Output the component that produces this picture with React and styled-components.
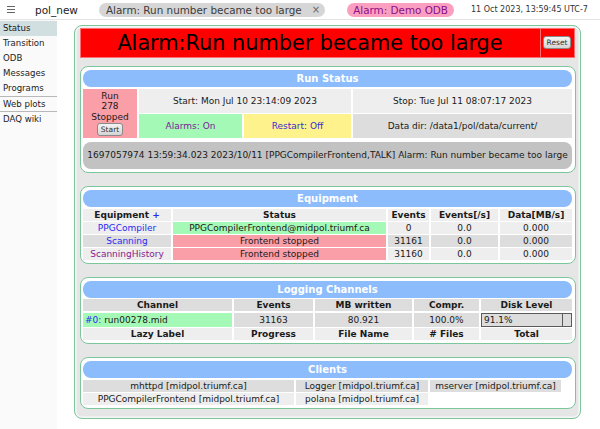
import React from "react";
import styled, { createGlobalStyle } from "styled-components";

const GREEN = "#7cc69c";
const BLUE_HDR = "#8cbcfc";
const PINK = "#fa9ea8";
const MINT = "#a4f9b6";
const YELLOW = "#fef28c";
const LIGHT = "#eeeeee";
const DARK = "#dddddd";

const Global = createGlobalStyle`
  html, body { margin: 0; padding: 0; background: #fff; }
  body { font-family: "DejaVu Sans", Verdana, sans-serif; color: #1a1a1a; }
  * { box-sizing: border-box; }
`;

const Page = styled.div`
  width: 600px;
  height: 429px;
  overflow: hidden;
  display: flex;
  flex-direction: column;
`;

const TopBar = styled.header`
  flex: 0 0 20px;
  display: flex;
  align-items: center;
  border-bottom: 1px solid #e4e4e4;
  background: #fff;
  padding-left: 7px;
`;

const MenuIcon = styled.svg`
  width: 8px;
  height: 7px;
  flex: none;
`;

const Title = styled.span`
  margin-left: 20px;
  font-size: 10.5px;
  color: #222;
  line-height: 14px;
`;

const Pill = styled.span`
  display: inline-flex;
  align-items: center;
  height: 14px;
  border-radius: 7px;
  font-size: 10.4px;
  line-height: 14px;
  white-space: nowrap;
  margin-left: ${(p) => p.$gap}px;
  padding: 0 ${(p) => (p.$tone === "pink" ? 6 : 5)}px 0 ${(p) => (p.$tone === "pink" ? 6 : 7)}px;
  background: ${(p) => (p.$tone === "pink" ? "#fb9fc0" : "#d6d6d6")};
  color: ${(p) => (p.$tone === "pink" ? "#8a0f8a" : "#3c3c3c")};
`;

const CloseX = styled.span`
  margin-left: 10px;
  font-size: 10px;
  color: #666;
`;

const Clock = styled.span`
  margin-left: 17px;
  font-size: 8px;
  color: #333;
  white-space: nowrap;
`;

const Body = styled.div`
  flex: 1;
  display: flex;
  min-height: 0;
`;

const Sidebar = styled.nav`
  flex: 0 0 57px;
  background: #fafafa;
  padding-top: 1px;
  display: flex;
  flex-direction: column;
`;

const NavItem = styled.div`
  height: 15px;
  line-height: 15px;
  padding-left: 3px;
  font-size: 8.6px;
  color: #222;
  white-space: nowrap;
  background: ${(p) => (p.$active ? "#d1dfe0" : "transparent")};
  border-top: ${(p) => (p.$divider ? "1px solid #b8b8b8" : "none")};
`;

const Main = styled.main`
  flex: 1;
  padding: 5px 19px 5px 17px;
  background: #fff;
`;

const Frame = styled.div`
  border: 1.5px solid ${GREEN};
  border-radius: 8px;
  background: #e6e6e6;
  box-shadow: inset 0 0 0 1.5px #f6f6f6;
  padding: 1.5px 4.5px 9px 4.5px;
  display: flex;
  flex-direction: column;
`;

const Banner = styled.div`
  height: 30px;
  display: flex;
  background: #ff0000;
  border: 1px solid #ff6f6f;
  margin-right: 1px;
  margin-bottom: 8px;
`;

const BannerText = styled.div`
  flex: 1;
  display: flex;
  align-items: center;
  justify-content: center;
  font-size: 20.8px;
  color: #000;
  white-space: nowrap;
`;

const BannerAction = styled.div`
  flex: 0 0 34px;
  display: flex;
  align-items: center;
  justify-content: center;
  border-left: 1px solid #ff6f6f;
`;

const SmallButton = styled.button`
  font-family: "DejaVu Sans", Verdana, sans-serif;
  font-size: 7.5px;
  line-height: 9px;
  color: #333;
  padding: 1px 3px;
  border: 1px solid #8a8a8a;
  border-radius: 3px;
  background: linear-gradient(#f4f4f4, #d4d4d4);
  margin-top: ${(p) => p.$mt || 0}px;
`;

const Panel = styled.section`
  border: 1.5px solid ${GREEN};
  border-radius: 8px;
  background: #fff;
  padding: 3px 2.5px;
  margin-bottom: 13px;
  &:last-child { margin-bottom: 0; }
`;

const PanelHeader = styled.div`
  height: ${(p) => p.$h || 17}px;
  line-height: ${(p) => p.$h || 17}px;
  background: ${BLUE_HDR};
  border-radius: 8px;
  color: #fff;
  font-weight: bold;
  font-size: 10px;
  text-align: center;
`;

const RunGrid = styled.div`
  margin-top: 2px;
  display: grid;
  grid-template-columns: 54px 103px 107px 1fr;
  grid-template-rows: 24px 24px;
  column-gap: 2px;
  row-gap: 1px;
  grid-template-areas:
    "run start start stop"
    "run alarm restart dir";
`;

const tones = { light: LIGHT, dark: DARK, pink: PINK, mint: MINT, yellow: YELLOW, none: "transparent" };

const InfoCell = styled.div`
  grid-area: ${(p) => p.$area};
  background: ${(p) => tones[p.$tone]};
  color: ${(p) => p.$color || "#1a1a1a"};
  font-size: 9px;
  display: flex;
  align-items: center;
  justify-content: center;
  white-space: nowrap;
`;

const RunState = styled.div`
  grid-area: run;
  background: ${PINK};
  font-size: 9px;
  line-height: 10.5px;
  display: flex;
  flex-direction: column;
  align-items: center;
  justify-content: center;
  padding-top: 1px;
`;

const MessageBar = styled.div`
  margin-top: 4px;
  height: 27px;
  background: #c2c2c2;
  border-radius: 8px;
  font-size: 9px;
  display: flex;
  align-items: center;
  justify-content: center;
  white-space: nowrap;
`;

const DataGrid = styled.div`
  margin-top: ${(p) => p.$mt ?? 2}px;
  display: grid;
  grid-template-columns: ${(p) => p.$cols};
  grid-auto-rows: ${(p) => p.$rows || "12px"};
  grid-template-rows: ${(p) => p.$rows || "none"};
  column-gap: 2px;
  row-gap: ${(p) => p.$rowGap ?? 1}px;
`;

const Cell = styled.div`
  background: ${(p) => tones[p.$tone || "light"]};
  font-size: 9px;
  line-height: 12px;
  font-weight: ${(p) => (p.$bold ? "bold" : "normal")};
  color: ${(p) => p.$color || "#1a1a1a"};
  text-align: ${(p) => p.$align || "center"};
  padding-left: ${(p) => (p.$align === "left" ? 2 : 0)}px;
  white-space: pre;
  overflow: hidden;
  display: flex;
  align-items: center;
  justify-content: ${(p) => (p.$align === "left" ? "flex-start" : "center")};
`;

const CellText = styled.span`
  white-space: pre;
`;

const Accent = styled.span`
  color: ${(p) => p.$color};
  font-weight: ${(p) => (p.$bold ? "bold" : "inherit")};
`;

const DiskBar = styled.div`
  width: 100%;
  height: 100%;
  border: 1px solid #5a5a5a;
  background: ${DARK};
  display: flex;
`;

const DiskFill = styled.div`
  height: 100%;
  border-right: 1px solid #5a5a5a;
  background: ${DARK};
  font-size: 9px;
  line-height: 12px;
  padding-left: 2px;
  text-align: left;
`;

const LINK = "#2a2af2";
const VISITED = "#861a8c";

export default function App() {
  const disk = 91.1;
  return (
    <Page>
      <Global />
      <TopBar>
        <MenuIcon viewBox="0 0 8 7">
          <rect x="0" y="0" width="8" height="1" fill="#666" />
          <rect x="0" y="3" width="8" height="1" fill="#666" />
          <rect x="0" y="6" width="8" height="1" fill="#666" />
        </MenuIcon>
        <Title>pol_new</Title>
        <Pill $gap={21}>
          Alarm: Run number became too large<CloseX>×</CloseX>
        </Pill>
        <Pill $tone="pink" $gap={22}>Alarm: Demo ODB</Pill>
        <Clock>11 Oct 2023, 13:59:45 UTC-7</Clock>
      </TopBar>
      <Body>
        <Sidebar>
          <NavItem $active>Status</NavItem>
          <NavItem>Transition</NavItem>
          <NavItem>ODB</NavItem>
          <NavItem>Messages</NavItem>
          <NavItem>Programs</NavItem>
          <NavItem $divider>Web plots</NavItem>
          <NavItem $divider>DAQ wiki</NavItem>
        </Sidebar>
        <Main>
          <Frame>
            <Banner>
              <BannerText>Alarm:Run number became too large</BannerText>
              <BannerAction>
                <SmallButton>Reset</SmallButton>
              </BannerAction>
            </Banner>

            <Panel>
              <PanelHeader>Run Status</PanelHeader>
              <RunGrid>
                <RunState>
                  <span>Run</span>
                  <span>278</span>
                  <span>Stopped</span>
                  <SmallButton $mt={1}>Start</SmallButton>
                </RunState>
                <InfoCell $area="start" $tone="light">Start: Mon Jul 10 23:14:09 2023</InfoCell>
                <InfoCell $area="stop" $tone="light">Stop: Tue Jul 11 08:07:17 2023</InfoCell>
                <InfoCell $area="alarm" $tone="mint" $color="#7a1a9a">Alarms: On</InfoCell>
                <InfoCell $area="restart" $tone="yellow" $color="#3a2ad0">Restart: Off</InfoCell>
                <InfoCell $area="dir" $tone="dark">Data dir: /data1/pol/data/current/</InfoCell>
              </RunGrid>
              <MessageBar>
                1697057974 13:59:34.023 2023/10/11 [PPGCompilerFrontend,TALK] Alarm: Run number became too large
              </MessageBar>
            </Panel>

            <Panel>
              <PanelHeader>Equipment</PanelHeader>
              <DataGrid $cols="88px 213px 41px 67px 1fr">
                <Cell $bold>
                  <CellText>
                    Equipment <Accent $color={LINK}>+</Accent>
                  </CellText>
                </Cell>
                <Cell $bold>Status</Cell>
                <Cell $bold>Events</Cell>
                <Cell $bold>Events[/s]</Cell>
                <Cell $bold>Data[MB/s]</Cell>

                <Cell $color={LINK}>PPGCompiler</Cell>
                <Cell $tone="mint">PPGCompilerFrontend@midpol.triumf.ca</Cell>
                <Cell>0</Cell>
                <Cell>0.0</Cell>
                <Cell>0.000</Cell>

                <Cell $tone="dark" $color={LINK}>Scanning</Cell>
                <Cell $tone="pink">Frontend stopped</Cell>
                <Cell $tone="dark">31161</Cell>
                <Cell $tone="dark">0.0</Cell>
                <Cell $tone="dark">0.000</Cell>

                <Cell $color={VISITED}>ScanningHistory</Cell>
                <Cell $tone="pink">Frontend stopped</Cell>
                <Cell>31160</Cell>
                <Cell>0.0</Cell>
                <Cell>0.000</Cell>
              </DataGrid>
            </Panel>

            <Panel>
              <PanelHeader>Logging Channels</PanelHeader>
              <DataGrid
                $mt={1.5}
                $cols="149px 79px 97px 65px 1fr"
                $rows="12px 14px 12px"
                $rowGap={1.5}
              >
                <Cell $tone="dark" $bold>Channel</Cell>
                <Cell $tone="dark" $bold>Events</Cell>
                <Cell $tone="dark" $bold>MB written</Cell>
                <Cell $tone="dark" $bold>Compr.</Cell>
                <Cell $tone="dark" $bold>Disk Level</Cell>

                <Cell $tone="mint" $align="left">
                  <CellText>
                    <Accent $color={LINK}>#0:</Accent> run00278.mid
                  </CellText>
                </Cell>
                <Cell $tone="dark">31163</Cell>
                <Cell $tone="dark">80.921</Cell>
                <Cell $tone="dark">100.0%</Cell>
                <Cell $tone="dark">
                  <DiskBar>
                    <DiskFill style={{ width: `${disk}%` }}>{disk}%</DiskFill>
                  </DiskBar>
                </Cell>

                <Cell $bold>Lazy Label</Cell>
                <Cell $bold>Progress</Cell>
                <Cell $bold>File Name</Cell>
                <Cell $bold># Files</Cell>
                <Cell $bold>Total</Cell>
              </DataGrid>
            </Panel>

            <Panel>
              <PanelHeader>Clients</PanelHeader>
              <DataGrid $cols="211px 132px 131px">
                <Cell $tone="dark">mhttpd [midpol.triumf.ca]</Cell>
                <Cell $tone="dark">Logger [midpol.triumf.ca]</Cell>
                <Cell $tone="dark">mserver [midpol.triumf.ca]</Cell>
                <Cell>PPGCompilerFrontend [midpol.triumf.ca]</Cell>
                <Cell>polana [midpol.triumf.ca]</Cell>
              </DataGrid>
            </Panel>
          </Frame>
        </Main>
      </Body>
    </Page>
  );
}
